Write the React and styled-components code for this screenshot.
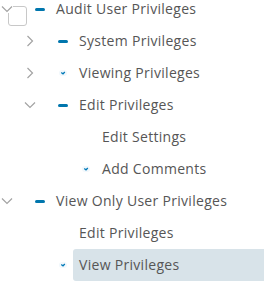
import React from "react";
import styled, { createGlobalStyle } from "styled-components";

const GlobalStyle = createGlobalStyle`
  html, body {
    margin: 0;
    padding: 0;
    background: #fff;
    overflow: hidden;
  }
  body {
    font-family: "Open Sans", Lato, sans-serif;
  }
`;

const nodes = [
  { level: 0, caret: "down", box: "partial", label: "Audit User Privileges", focus: true },
  { level: 1, caret: "right", box: "partial", label: "System Privileges" },
  { level: 1, caret: "right", box: "check", label: "Viewing Privileges" },
  { level: 1, caret: "down", box: "partial", label: "Edit Privileges" },
  { level: 2, label: "Edit Settings" },
  { level: 2, box: "check", label: "Add Comments" },
  { level: 0, caret: "down", box: "partial", label: "View Only User Privileges" },
  { level: 1, label: "Edit Privileges" },
  { level: 1, box: "check", label: "View Privileges", selected: true },
];

export default function App() {
  return (
    <>
      <GlobalStyle />
      <Tree>
        {nodes.map((node, i) => (
          <Row key={i} $level={node.level}>
            <CaretSlot>
              {node.focus && <FocusRing />}
              {node.caret === "down" && <CaretDown />}
              {node.caret === "right" && <CaretRight />}
            </CaretSlot>
            <BoxSlot>
              {node.box === "partial" && <Dash />}
              {node.box === "check" && <Check />}
            </BoxSlot>
            <Label $selected={node.selected}>
              <Text>{node.label}</Text>
            </Label>
          </Row>
        ))}
      </Tree>
    </>
  );
}

function CaretDown() {
  return (
    <CaretSvg width="12" height="8" viewBox="0 0 12 8">
      <polyline points="1,1.5 6,6.5 11,1.5" fill="none" stroke="#a3a3a3" strokeWidth="1.2" />
    </CaretSvg>
  );
}

function CaretRight() {
  return (
    <CaretSvg width="8" height="12" viewBox="0 0 8 12" style={{ marginLeft: 3 }}>
      <polyline points="1.5,1 6.5,6 1.5,11" fill="none" stroke="#a3a3a3" strokeWidth="1.2" />
    </CaretSvg>
  );
}

function Check() {
  return (
    <svg width="8" height="6" viewBox="0 0 8 6">
      <rect x="0" y="0" width="8" height="6" rx="3" fill="#f2f8fc" />
      <polyline points="2.3,2.4 4,3.9 5.8,2" fill="none" stroke="#0079b8" strokeWidth="1.4" />
    </svg>
  );
}

const Tree = styled.div`
  margin-top: -7px;
  display: flex;
  flex-direction: column;
`;

const Row = styled.div`
  display: flex;
  align-items: center;
  height: 32px;
  padding-left: ${(p) => p.$level * 23}px;
  color: #565656;
  font-size: 14px;
  letter-spacing: 0.3px;
`;

const CaretSlot = styled.div`
  position: relative;
  width: 30px;
  height: 100%;
  display: flex;
  align-items: center;
  flex-shrink: 0;
`;

const CaretSvg = styled.svg`
  position: relative;
  margin-left: 1px;
  background: #fff;
  z-index: 1;
`;

const FocusRing = styled.div`
  position: absolute;
  left: 8px;
  top: 13px;
  width: 17px;
  height: 18px;
  border: 1px solid #c8c8c8;
  border-radius: 3px;
`;

const BoxSlot = styled.div`
  width: 20px;
  display: flex;
  align-items: center;
  justify-content: center;
  flex-shrink: 0;
`;

const Dash = styled.span`
  width: 10px;
  height: 3px;
  border-radius: 2px;
  background: #0076ad;
`;

const Label = styled.div`
  flex: 1;
  height: 100%;
  display: flex;
  align-items: center;
  padding: 0 6px;
  white-space: nowrap;
  border-radius: 3px 0 0 3px;
  background: ${(p) => (p.$selected ? "#d8e3e9" : "transparent")};
`;

const Text = styled.span`
  position: relative;
  top: -1px;
`;
